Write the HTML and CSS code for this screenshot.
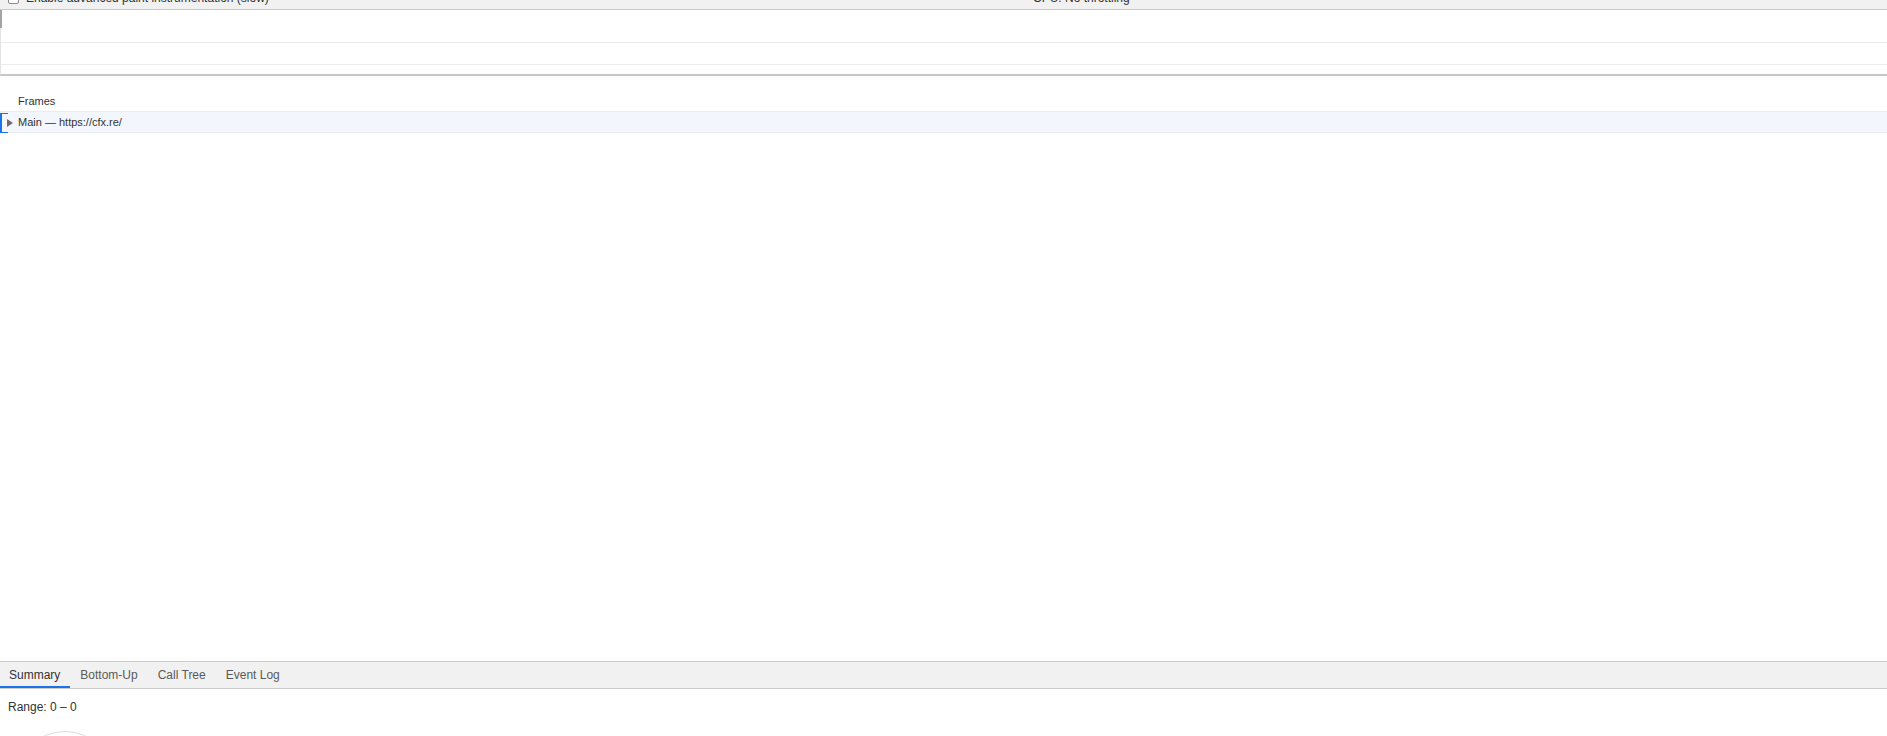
FILE: index.html
```html
<!DOCTYPE html>
<html>
<head>
<meta charset="utf-8">
<link rel="stylesheet" href="styles.css">
</head>
<body>
<div class="app">
  <div class="settings">
    <div class="settings-row">
      <div class="setting">
        <span class="checkbox"></span>
        <span>Enable advanced paint instrumentation (slow)</span>
      </div>
      <div class="setting">
        <span>CPU: No throttling</span>
      </div>
    </div>
  </div>

  <div class="overview">
    <div class="ov-row ov-row-1"><span class="ov-marker"></span></div>
    <div class="ov-row ov-row-2"></div>
    <div class="ov-row ov-row-3"></div>
  </div>

  <div class="main-area">
    <div class="tree-header">Frames</div>
    <div class="tree-item selected">
      <svg class="arrow" width="6" height="8" viewBox="0 0 6 8"><path d="M0 0 L6 4 L0 8 Z" fill="#6e6e6e"/></svg>
      <span>Main — https://cfx.re/</span>
    </div>
  </div>

  <div class="details">
    <div class="tabs">
      <div class="tab active">Summary</div>
      <div class="tab">Bottom-Up</div>
      <div class="tab">Call Tree</div>
      <div class="tab">Event Log</div>
    </div>
    <div class="summary">
      <div class="range">Range: 0 – 0</div>
      <div class="pie"></div>
    </div>
  </div>
</div>
</body>
</html>
```

FILE: styles.css
```css
html, body {
  margin: 0;
  padding: 0;
  background: #ffffff;
}
body {
  font-family: "Liberation Sans", Arial, sans-serif;
  color: #333333;
  overflow: hidden;
}
.app {
  height: 736px;
  display: flex;
  flex-direction: column;
  overflow: hidden;
}

/* top settings bar (scrolled, mostly hidden) */
.settings {
  height: 9px;
  flex: none;
  overflow: hidden;
  background: #f1f1f1;
  border-bottom: 1px solid #cbcbcb;
}
.settings-row {
  margin-top: -15px;
  height: 26px;
  display: grid;
  grid-template-columns: 1025px auto;
  align-items: center;
  font-size: 12px;
  color: #333333;
}
.setting {
  display: flex;
  align-items: center;
  padding-left: 8px;
  white-space: nowrap;
}
.checkbox {
  width: 11px;
  height: 12px;
  box-sizing: border-box;
  border: 1px solid #8a8a8a;
  border-radius: 2px;
  background: #ffffff;
  margin-right: 7px;
}

/* overview */
.overview {
  flex: none;
  border-left: 1px solid #e3e3e3;
  border-bottom: 2px solid #c6c6c6;
}
.ov-row {
  display: flex;
}
.ov-row-1 {
  height: 32px;
  border-bottom: 1px solid #ececec;
}
.ov-row-2 {
  height: 21px;
  border-bottom: 1px solid #ececec;
}
.ov-row-3 {
  height: 9px;
}
.ov-marker {
  width: 2px;
  height: 18px;
  margin-left: -1px;
  background: #a4a4a4;
}

/* frames tree */
.main-area {
  flex: 1;
  padding-top: 15px;
  font-size: 11px;
}
.tree-header {
  height: 20px;
  line-height: 20px;
  padding-left: 18px;
  border-bottom: 1px solid #ececec;
  color: #333333;
}
.tree-item {
  position: relative;
  height: 20px;
  display: flex;
  align-items: center;
  padding-left: 7px;
  border-bottom: 1px solid #ececec;
  color: #333333;
}
.tree-item.selected {
  background: #f3f7fd;
}
.tree-item.selected::before {
  content: "";
  position: absolute;
  left: 0;
  top: 1px;
  bottom: -1px;
  width: 6px;
  border-left: 2px solid #1a73e8;
  border-top: 1px solid #1a73e8;
  border-bottom: 1px solid #1a73e8;
}
.arrow {
  margin-right: 5px;
  margin-top: 1px;
}

/* bottom details panel */
.details {
  flex: none;
  height: 75px;
  box-sizing: border-box;
  border-top: 1px solid #cbcbcb;
  overflow: hidden;
}
.tabs {
  display: flex;
  height: 26px;
  background: #f1f1f1;
  border-bottom: 1px solid #cbcbcb;
  font-size: 12px;
}
.tab {
  padding: 0 10px;
  line-height: 26px;
  color: #5a5a5a;
  box-sizing: border-box;
  height: 26px;
  white-space: nowrap;
}
.tab.active {
  color: #333333;
  border-bottom: 2px solid #1a73e8;
  padding: 0 10px 0 9px;
}
.summary {
  padding: 10px 0 0 8px;
  font-size: 12px;
}
.range {
  line-height: 16px;
  color: #333333;
}
.pie {
  margin-top: 16px;
  margin-left: 6px;
  width: 102px;
  height: 102px;
  box-sizing: border-box;
  border: 1px solid #dcdcdc;
  border-radius: 50%;
}
```
